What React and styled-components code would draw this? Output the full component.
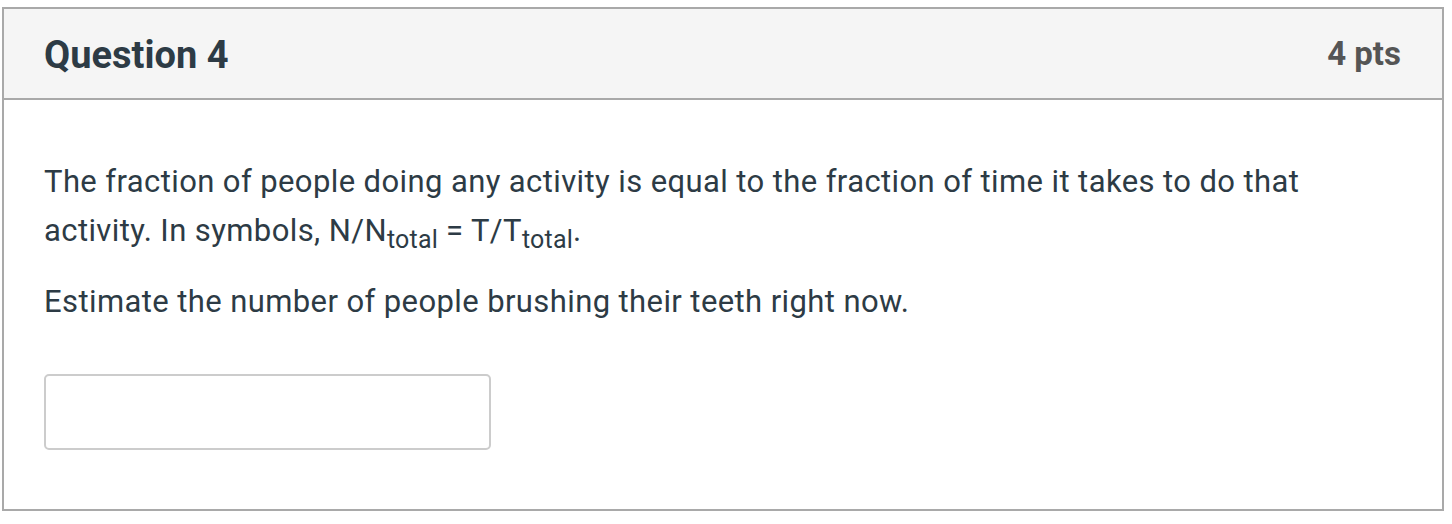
import React from "react";
import styled, { createGlobalStyle } from "styled-components";

const GlobalStyle = createGlobalStyle`
  body {
    margin: 0;
    background: #ffffff;
    font-family: Roboto, "Noto Sans", sans-serif;
  }
`;

const App = () => {
  return (
    <>
      <GlobalStyle />
      <QuestionCard>
        <Header>
          <Title>Question 4</Title>
          <Points>4 pts</Points>
        </Header>
        <Body>
          <Paragraph>
            The fraction of people doing any activity is equal to the fraction
            of time it takes to do that activity. In symbols, N/N
            <Sub>total</Sub> = T/T<Sub>total</Sub>.
          </Paragraph>
          <Paragraph>
            Estimate the number of people brushing their teeth right now.
          </Paragraph>
          <AnswerInput type="text" aria-label="Answer" />
        </Body>
      </QuestionCard>
    </>
  );
};

export default App;

// styles
const QuestionCard = styled.div`
  margin: 7px 8px 0 2px;
  border: 2px solid #a9a9a9;
  box-sizing: border-box;
  height: 504px;
  display: flex;
  flex-direction: column;
`;

const Header = styled.div`
  display: flex;
  align-items: center;
  justify-content: space-between;
  height: 89px;
  padding: 0 41px 0 40px;
  background: #f5f5f5;
  border-bottom: 2px solid #a9a9a9;
  box-sizing: content-box;
`;

const Title = styled.h2`
  margin: 0;
  font-size: 38px;
  font-weight: 700;
  color: #2d3b45;
  padding-top: 2px;
`;

const Points = styled.span`
  font-size: 33px;
  font-weight: 700;
  color: #555555;
`;

const Body = styled.div`
  padding: 57px 40px 0 40px;
`;

const Paragraph = styled.p`
  margin: 0 0 22px;
  font-size: 31px;
  letter-spacing: 0.4px;
  line-height: 49px;
  color: #2d3b45;
  max-width: 1300px;
`;

const Sub = styled.span`
  font-size: 25px;
  letter-spacing: 0.2px;
  line-height: 1;
  position: relative;
  top: 7px;
`;

const AnswerInput = styled.input`
  display: block;
  margin-top: 48px;
  width: 447px;
  height: 76px;
  box-sizing: border-box;
  border: 2px solid #cccccc;
  border-radius: 5px;
  background: #ffffff;
  outline: none;
`;
